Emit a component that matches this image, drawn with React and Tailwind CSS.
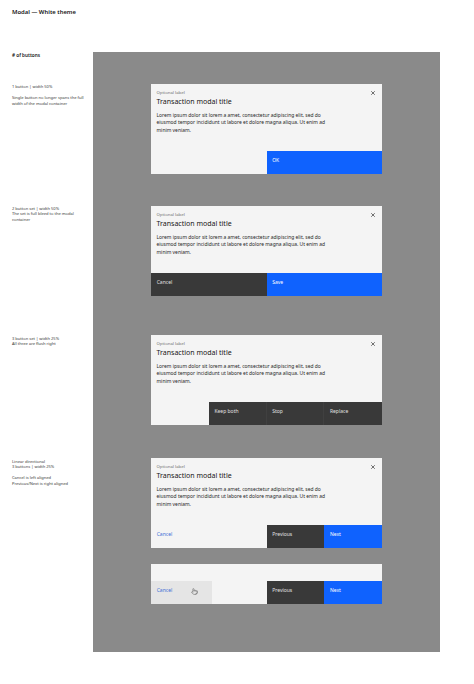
import React from 'react';
import { X, Pointer } from 'lucide-react';

const lorem =
  'Lorem ipsum dolor sit lorem a amet, consectetur adipiscing elit, sed do eiusmod tempor incididunt ut labore et dolore magna aliqua. Ut enim ad minim veniam.';

const ModalBody = () => (
  <div className="relative h-[67px] pl-[5.5px] pt-[5px]">
    <div className="text-[4.3px] leading-[6px] text-[#6f6f6f]">Optional label</div>
    <div className="mt-[0.5px] text-[7px] leading-[12px] text-[#161616]">Transaction modal title</div>
    <p className="mt-[4.5px] w-[172px] text-[4.95px] leading-[7.3px] text-[#262626]">{lorem}</p>
    <X size={6} strokeWidth={2.4} className="absolute right-[6px] top-[5.5px] text-[#161616]" />
  </div>
);

const Btn = ({ label, className }) => (
  <div className={`h-[23px] pl-[5.7px] pt-[5.5px] text-[5px] leading-[7px] ${className}`}>{label}</div>
);

const Modal = ({ className, children }) => (
  <div className={`w-[231px] bg-[#f4f4f4] ${className}`}>
    <ModalBody />
    <div className="flex justify-end">{children}</div>
  </div>
);

const Note = ({ className, lines }) => (
  <div className={`text-[4.05px] leading-[5.5px] text-[#393939] ${className}`}>
    {lines.map((line, i) => (
      <div key={i} className="min-h-[5.5px]">{line}</div>
    ))}
  </div>
);

export default function App() {
  return (
    <div className="h-[684px] w-[474px] overflow-hidden bg-white font-['Noto_Sans',sans-serif]">
      <div className="pl-[12px] pt-[9px] text-[5.9px] font-semibold leading-[7px] text-[#161616]">Modal — White theme</div>

      <div className="mt-[36px] flex">
        {/* Notes */}
        <div className="w-[93px] pl-[12px]">
          <div className="mt-[-0.5px] text-[4.7px] font-semibold leading-[7px] text-[#161616]">
            # of buttons
          </div>
          <Note
            className="mt-[25.5px]"
            lines={['1 button | width 50%', '', 'Single button no longer spans the full', 'width of the modal container']}
          />
          <Note
            className="mt-[99.5px]"
            lines={['2 button set | width 50%', 'The set is full bleed to the modal', 'container']}
          />
          <Note className="mt-[113.5px]" lines={['3 button set | width 25%', 'All three are flush right']} />
          <Note
            className="mt-[112px]"
            lines={['Linear directional', '3 buttons | width 25%', '', 'Cancel is left aligned', 'Previous/Next is right aligned']}
          />
        </div>

        {/* Panel */}
        <div className="h-[600px] w-[347px] bg-[#8a8a8a] pl-[58px] pt-[32px]">
          <Modal>
            <Btn label="OK" className="w-[115.5px] bg-[#0f62fe] text-white" />
          </Modal>

          <Modal className="mt-[32px]">
            <Btn label="Cancel" className="w-[115.5px] bg-[#393939] text-[#e0e0e0]" />
            <Btn label="Save" className="w-[115.5px] bg-[#0f62fe] text-white" />
          </Modal>

          <Modal className="mt-[39px]">
            <Btn label="Keep both" className="w-[57.75px] border-r border-[#404040] bg-[#393939] text-[#e0e0e0]" />
            <Btn label="Stop" className="w-[57.75px] border-r border-[#404040] bg-[#393939] text-[#e0e0e0]" />
            <Btn label="Replace" className="w-[57.75px] bg-[#393939] text-[#e0e0e0]" />
          </Modal>

          <Modal className="mt-[33px]">
            <Btn label="Cancel" className="mr-auto w-[57.75px] text-[#3d6fd6]" />
            <Btn label="Previous" className="w-[57.75px] bg-[#393939] text-[#e0e0e0]" />
            <Btn label="Next" className="w-[57.75px] bg-[#0f62fe] text-white" />
          </Modal>

          {/* Hover state of the cancel button */}
          <div className="mt-[15.5px] w-[231px] bg-[#f4f4f4] pt-[17.5px]">
            <div className="flex justify-end">
              <div className="relative mr-auto h-[23px] w-[61px] bg-[#e5e5e5] pl-[5.7px] pt-[5.5px] text-[5px] leading-[7px] text-[#3d6fd6]">
                Cancel
                <Pointer size={7} strokeWidth={1.6} className="absolute left-[39.5px] top-[7px] text-[#5a5a5a]" />
              </div>
              <Btn label="Previous" className="w-[57.75px] bg-[#393939] text-[#e0e0e0]" />
              <Btn label="Next" className="w-[57.75px] bg-[#0f62fe] text-white" />
            </div>
          </div>
        </div>
      </div>
    </div>
  );
}
